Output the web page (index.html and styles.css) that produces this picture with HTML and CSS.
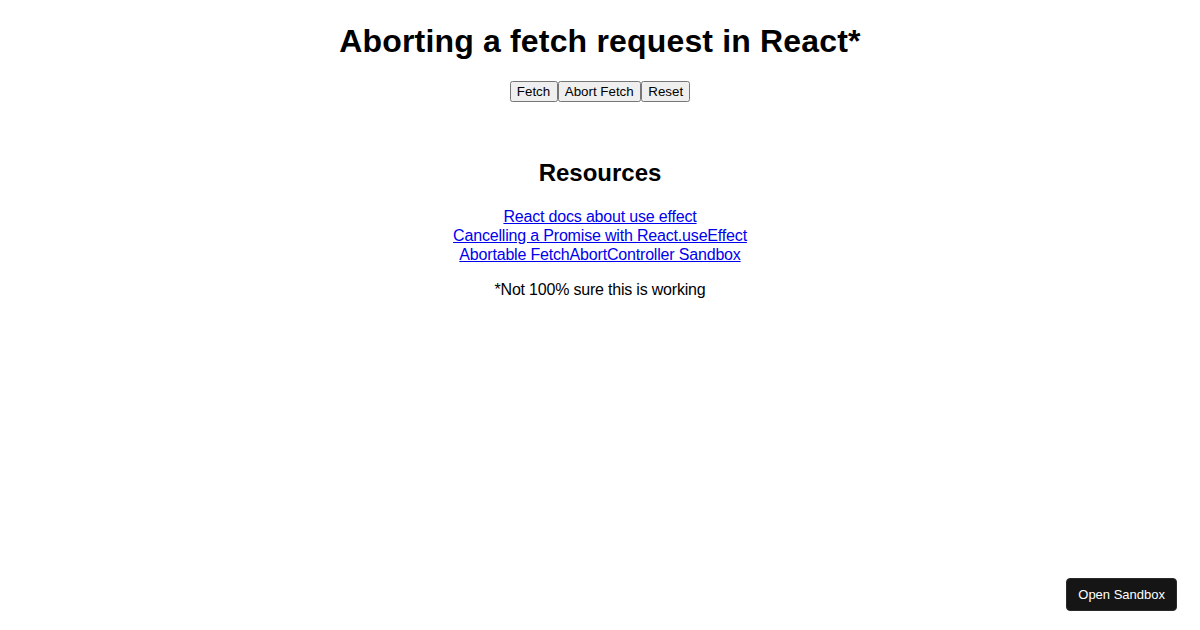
FILE: index.html
```html
<!DOCTYPE html>
<html>
<head>
<meta charset="utf-8">
<link rel="stylesheet" href="styles.css">
</head>
<body>
<div class="app">
  <h1>Aborting a fetch request in React*</h1>
  <div class="controls"><button>Fetch</button><button>Abort Fetch</button><button>Reset</button></div>
  <div class="result"></div>
  <h2>Resources</h2>
  <div class="links">
    <div><a href="#">React docs about use effect</a></div>
    <div><a href="#">Cancelling a Promise with React.useEffect</a></div>
    <div><a href="#">Abortable FetchAbortController Sandbox</a></div>
  </div>
  <p class="note">*Not 100% sure this is working</p>
</div>
<a class="open-sandbox" href="#">Open Sandbox</a>
</body>
</html>
```

FILE: styles.css
```css
html, body {
  margin: 0;
  padding: 0;
}
body {
  font-family: "Liberation Sans", Arial, sans-serif;
  background: #fff;
  color: #000;
}
.app {
  text-align: center;
  padding: 22.5px 8px 0;
}
h1 {
  font-size: 32px;
  margin: 0 0 21.44px;
  letter-spacing: 0.17px;
}
h2 {
  font-size: 24px;
  margin: 19.92px 0;
}
.controls {
  height: 21px;
}
.controls button {
  font-family: "Liberation Sans", Arial, sans-serif;
  font-size: 13.33px;
  height: 21px;
  padding: 1px 5.3px;
  vertical-align: top;
}
.result {
  height: 37px;
}
.links {
  font-size: 16px;
  line-height: 19px;
  letter-spacing: -0.18px;
}
.links a {
  color: #0000ee;
}
.note {
  font-size: 16px;
  margin: 17px 0 16px;
  letter-spacing: -0.2px;
}
.open-sandbox {
  position: fixed;
  right: 23px;
  bottom: 19px;
  background: #151515;
  color: #fff;
  border-radius: 4px;
  font-size: 13px;
  padding: 8px 11px;
  text-decoration: none;
  line-height: 15px;
  border: 1px solid #2a2a2a;
}
```
